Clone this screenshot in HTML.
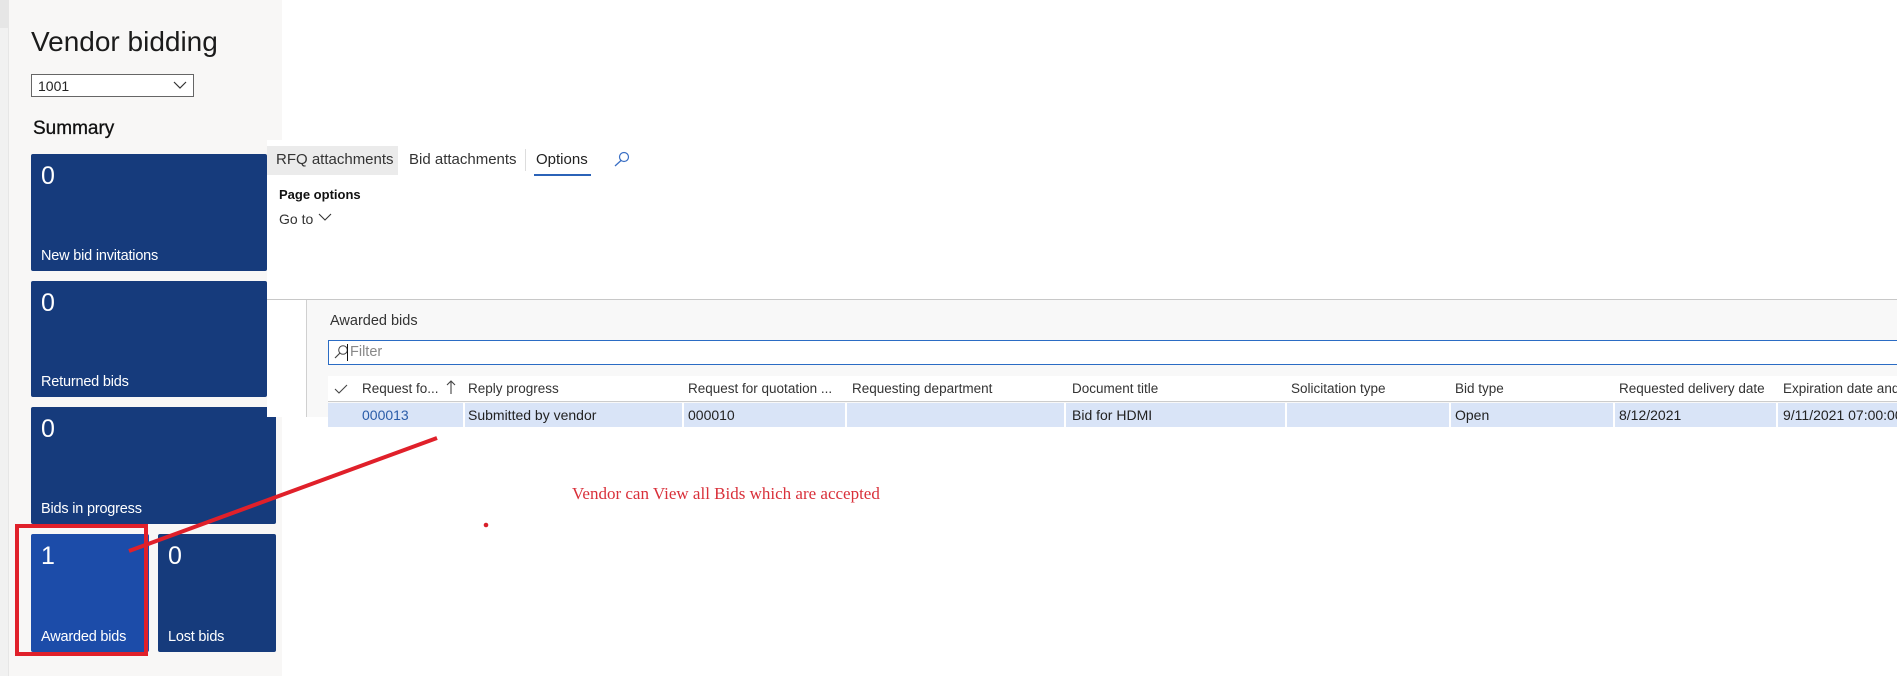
<!DOCTYPE html>
<html><head><meta charset="utf-8"><style>
*{margin:0;padding:0;box-sizing:border-box}
body{width:1897px;height:676px;overflow:hidden;background:#fff;font-family:"Liberation Sans",sans-serif;position:relative;color:#222}
.a{position:absolute}
.tile{position:absolute;background:#163b7c;color:#fff;border-radius:2px}
.tile .n{position:absolute;left:10px;top:8px;font-size:25px}
.tile .l{position:absolute;left:10px;bottom:7px;font-size:14.5px;letter-spacing:-0.2px}
.hd{position:absolute;top:381px;font-size:13.5px;color:#333;white-space:nowrap}
.cl{position:absolute;top:407px;font-size:14px;color:#222;white-space:nowrap}
.sep{position:absolute;top:403px;width:2px;height:24px;background:#fff}
</style></head><body>
<div class="a" style="left:0;top:0;width:282px;height:676px;background:#f8f7f6"></div>
<div class="a" style="left:0;top:0;width:9px;height:676px;background:#f1f1f1;border-right:1px solid #e6e6e6"></div>
<div class="a" style="left:0;top:0;width:9px;height:28px;background:#e6e6e6"></div>
<div class="a" style="left:31px;top:26px;font-size:28px;color:#1b1b1b">Vendor bidding</div>
<div class="a" style="left:31px;top:74px;width:163px;height:23px;border:1px solid #666;background:#fff;font-size:14px;padding:3px 0 0 6px">1001
<svg class="a" style="right:6px;top:6px" width="14" height="9"><path d="M1 1 L7 7 L13 1" fill="none" stroke="#333" stroke-width="1.2"/></svg></div>
<div class="a" style="left:33px;top:118px;font-size:19px;color:#111;font-weight:500;-webkit-text-stroke:0.3px #111">Summary</div>
<div class="tile" style="left:31px;top:154px;width:236px;height:117px"><div class="n">0</div><div class="l">New bid invitations</div></div>
<div class="tile" style="left:31px;top:281px;width:236px;height:116px"><div class="n">0</div><div class="l">Returned bids</div></div>
<div class="tile" style="left:31px;top:407px;width:245px;height:117px"><div class="n">0</div><div class="l">Bids in progress</div></div>
<div class="tile" style="left:31px;top:534px;width:118px;height:118px;background:#1c4ca9"><div class="n">1</div><div class="l">Awarded bids</div></div>
<div class="tile" style="left:158px;top:534px;width:118px;height:118px"><div class="n">0</div><div class="l">Lost bids</div></div>
<div class="a" style="left:267px;top:140px;width:1630px;height:277px;background:#fff"></div>
<div class="a" style="left:267px;top:146px;width:131px;height:29px;background:#ebebeb"></div>
<div class="a" style="left:276px;top:151px;font-size:15px;color:#333">RFQ attachments</div>
<div class="a" style="left:409px;top:151px;font-size:15px;color:#333">Bid attachments</div>
<div class="a" style="left:525px;top:149px;width:1px;height:22px;background:#ddd"></div>
<div class="a" style="left:536px;top:151px;font-size:15px;color:#222">Options</div>
<div class="a" style="left:534px;top:174px;width:57px;height:2px;background:#2b63b8"></div>
<svg class="a" style="left:613px;top:151px" width="18" height="16"><circle cx="11" cy="6" r="4.5" fill="none" stroke="#3a6fc4" stroke-width="1.2"/><path d="M8 9.5 L2 15" stroke="#3a6fc4" stroke-width="1.3"/></svg>
<div class="a" style="left:279px;top:187px;font-size:13px;font-weight:bold;color:#111">Page options</div>
<div class="a" style="left:279px;top:211px;font-size:14px;color:#333">Go to</div>
<svg class="a" style="left:318px;top:213px" width="14" height="9"><path d="M1 1 L7 7 L13 1" fill="none" stroke="#333" stroke-width="1.1"/></svg>
<div class="a" style="left:267px;top:299px;width:1630px;height:1px;background:#c8c8c8"></div>
<div class="a" style="left:306px;top:300px;width:1px;height:117px;background:#d0d0d0"></div>
<div class="a" style="left:307px;top:300px;width:1590px;height:117px;background:#f8f8f8"></div>
<div class="a" style="left:330px;top:313px;font-size:14.5px;color:#333">Awarded bids</div>
<div class="a" style="left:328px;top:340px;width:1569px;height:25px;background:#fff;border:1px solid #2b6cc4;border-right:none"></div>
<svg class="a" style="left:333px;top:344px" width="16" height="16"><circle cx="10" cy="6" r="4.3" fill="none" stroke="#444" stroke-width="1"/><path d="M7 9 L2 14" stroke="#444" stroke-width="1.2"/></svg>
<div class="a" style="left:347px;top:344px;width:1px;height:17px;background:#111"></div>
<div class="a" style="left:350px;top:344px;font-size:14.5px;color:#888">Filter</div>
<div class="a" style="left:328px;top:376px;width:1569px;height:26px;background:#fff;border-bottom:1px solid #ccc"></div>
<div class="a" style="left:328px;top:403px;width:1569px;height:24px;background:#d9e4f7"></div>
<div class="a" style="left:328px;top:427px;width:1569px;height:14px;background:#fff"></div>
<svg class="a" style="left:334px;top:383px" width="14" height="12"><path d="M1 6 L5 10 L13 2" fill="none" stroke="#444" stroke-width="1.1"/></svg>
<div class="hd" style="left:362px">Request fo...</div>
<svg class="a" style="left:446px;top:379px" width="10" height="16"><path d="M5 15 V2 M1 6 L5 2 L9 6" fill="none" stroke="#444" stroke-width="1.1"/></svg>
<div class="hd" style="left:468px">Reply progress</div>
<div class="hd" style="left:688px">Request for quotation ...</div>
<div class="hd" style="left:852px">Requesting department</div>
<div class="hd" style="left:1072px">Document title</div>
<div class="hd" style="left:1291px">Solicitation type</div>
<div class="hd" style="left:1455px">Bid type</div>
<div class="hd" style="left:1619px">Requested delivery date</div>
<div class="hd" style="left:1783px">Expiration date and</div>
<div class="sep" style="left:463px"></div><div class="sep" style="left:682px"></div><div class="sep" style="left:845px"></div><div class="sep" style="left:1064px"></div><div class="sep" style="left:1285px"></div><div class="sep" style="left:1449px"></div><div class="sep" style="left:1613px"></div><div class="sep" style="left:1776px"></div>
<div class="cl" style="left:362px;color:#2a5ca8">000013</div>
<div class="cl" style="left:468px">Submitted by vendor</div>
<div class="cl" style="left:688px">000010</div>
<div class="cl" style="left:1072px">Bid for HDMI</div>
<div class="cl" style="left:1455px">Open</div>
<div class="cl" style="left:1619px">8/12/2021</div>
<div class="cl" style="left:1783px">9/11/2021 07:00:00</div>
<div class="a" style="left:572px;top:484px;font-family:'Liberation Serif',serif;font-size:17px;color:#d9303a;white-space:nowrap">Vendor can View all Bids which are accepted</div>
<svg class="a" style="left:0;top:0" width="1897" height="676">
<circle cx="486" cy="525" r="2.3" fill="#d8202a"/>
<path d="M437 438 L129 551" stroke="#e0202a" stroke-width="4"/>
<rect x="17" y="526" width="129" height="128" fill="none" stroke="#e0202a" stroke-width="4"/>
</svg>
</body></html>
